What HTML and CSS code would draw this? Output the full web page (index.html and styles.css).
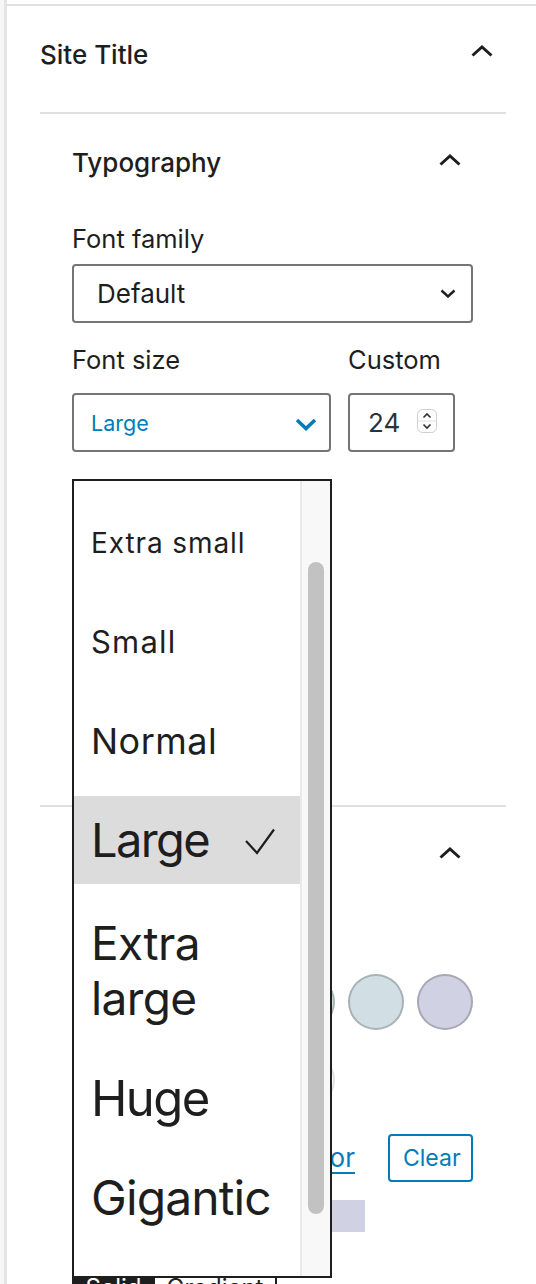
FILE: index.html
```html
<!DOCTYPE html>
<html lang="en">
<head>
<meta charset="utf-8">
<title>Site Title – Typography</title>
<link rel="stylesheet" href="styles.css">
</head>
<body>
<div class="app">
  <div class="rail"></div>
  <div class="panel">
    <div class="sidebar">
      <div class="panel-head">
        <h2 class="panel-title">Site Title</h2>
        <svg class="chev-up" viewBox="0 0 22 12" aria-hidden="true"><polyline points="1.5,10.5 11,2 20.5,10.5" fill="none" stroke="#1e1e1e" stroke-width="3"/></svg>
      </div>
      <div class="divider"></div>

      <section class="tools typography">
        <div class="tools-head">
          <h3 class="tools-title">Typography</h3>
          <svg class="chev-up" viewBox="0 0 22 12" aria-hidden="true"><polyline points="1.5,10.5 11,2 20.5,10.5" fill="none" stroke="#1e1e1e" stroke-width="3"/></svg>
        </div>
        <label class="field-label">Font family</label>
        <div class="select select-wide">
          <span class="select-value">Default</span>
          <svg class="caret-sm" viewBox="0 0 16 9" aria-hidden="true"><polyline points="1.5,1.5 8,7.5 14.5,1.5" fill="none" stroke="#1e1e1e" stroke-width="2.4"/></svg>
        </div>
        <div class="size-row">
          <div class="size-col">
            <label class="field-label">Font size</label>
            <div class="select select-size">
              <span class="select-value is-blue">Large</span>
              <svg class="caret-blue" viewBox="0 0 22 13" aria-hidden="true"><polyline points="2,2 11,10.5 20,2" fill="none" stroke="#007cba" stroke-width="3.6"/></svg>
            </div>
          </div>
          <div class="custom-col">
            <label class="field-label">Custom</label>
            <div class="number">
              <span class="number-value">24</span>
              <svg class="spinner" viewBox="0 0 20 24" aria-hidden="true">
                <rect x="0.5" y="0.5" width="19" height="23" rx="5" fill="#fdfdfd" stroke="#cfcfcf"/>
                <line x1="0.5" y1="12" x2="19.5" y2="12" stroke="#e2e2e2"/>
                <polyline points="6.5,8.5 10,5 13.5,8.5" fill="none" stroke="#2c3338" stroke-width="1.6"/>
                <polyline points="6.5,15.5 10,19 13.5,15.5" fill="none" stroke="#2c3338" stroke-width="1.6"/>
              </svg>
            </div>
          </div>
        </div>
      </section>

      <div class="divider"></div>

      <section class="tools color">
        <div class="tools-head">
          <h3 class="tools-title">Color</h3>
          <svg class="chev-up" viewBox="0 0 22 12" aria-hidden="true"><polyline points="1.5,10.5 11,2 20.5,10.5" fill="none" stroke="#1e1e1e" stroke-width="3"/></svg>
        </div>
        <div class="swatches">
          <span class="swatch sw-black"></span>
          <span class="swatch sw-darkgray"></span>
          <span class="swatch sw-gray"></span>
          <span class="swatch sw-green"></span>
          <span class="swatch sw-blue"></span>
          <span class="swatch sw-purple"></span>
          <span class="swatch sw-red"></span>
          <span class="swatch sw-orange"></span>
          <span class="swatch sw-yellow"></span>
          <span class="swatch sw-white"></span>
        </div>
        <div class="picker-actions">
          <a class="link-btn">Custom color</a>
          <button class="btn-clear" type="button">Clear</button>
        </div>
        <div class="color-bar"></div>
        <div class="tabs">
          <span class="tab tab-solid is-active">Solid</span>
          <span class="tab tab-gradient">Gradient</span>
        </div>
      </section>
    </div>
  </div>

  <div class="dropdown" role="listbox">
    <div class="options">
      <div class="option opt-xs">Extra small</div>
      <div class="option opt-sm">Small</div>
      <div class="option opt-md">Normal</div>
      <div class="option opt-lg is-selected"><span>Large</span><svg class="check" viewBox="0 0 30 27" aria-hidden="true"><polyline points="1,13 12,25 29,1.5" fill="none" stroke="#1e1e1e" stroke-width="2.2"/></svg></div>
      <div class="option opt-xl">Extra large</div>
      <div class="option opt-huge">Huge</div>
      <div class="option opt-gig">Gigantic</div>
    </div>
    <div class="scrolltrack"><div class="thumb"></div></div>
  </div>
</div>
</body>
</html>
```

FILE: styles.css
```css
* { box-sizing: border-box; }

html, body {
  margin: 0;
  padding: 0;
  overflow: hidden;
  background: #fff;
}

body {
  font-family: Inter, "Noto Sans", sans-serif;
  color: #1e1e1e;
}

.app {
  position: relative;
  display: flex;
  width: 536px;
  height: 1284px;
  overflow: hidden;
}

.rail {
  flex: none;
  width: 7px;
  background: #f6f6f6;
  border-right: 3px solid #e4e4e4;
}

.panel {
  flex: 1;
  min-width: 0;
  padding-top: 4px;
}

.sidebar {
  border-top: 2px solid #e0e0e0;
  padding: 0 30px 0 33px;
}

.panel-head {
  height: 97px;
  margin-bottom: 9px;
  display: flex;
  align-items: center;
  justify-content: space-between;
}

.panel-title,
.tools-title {
  margin: 0;
  font-size: 26px;
  font-weight: 500;
  line-height: 32px;
}

.chev-up {
  flex: none;
  width: 22px;
  height: 12px;
}

.panel-head .chev-up { margin: 0 13px 8px 0; }

.divider {
  height: 2px;
  background: #e0e0e0;
}

.tools {
  padding: 0 33px 0 32px;
}

.typography { padding-bottom: 353px; }

.tools-head {
  height: 60px;
  margin-top: 19px;
  display: flex;
  align-items: center;
  justify-content: space-between;
}

.tools-head .chev-up { margin: 0 12px 6px 0; }

.field-label {
  display: block;
  font-size: 25.5px;
  line-height: 30px;
  color: #1e1e1e;
}

.tools-head + .field-label { margin-top: 31px; }

.select {
  height: 59px;
  border: 2px solid #757575;
  border-radius: 4px;
  display: flex;
  align-items: center;
  justify-content: space-between;
  background: #fff;
}

.select-wide {
  margin-top: 10px;
  padding: 0 15px 0 23px;
}

.select-value {
  font-size: 26px;
  line-height: 32px;
}

.caret-sm { width: 16px; height: 9px; flex: none; }

.size-row {
  display: flex;
  gap: 17px;
  margin-top: 22px;
}

.size-col { width: 259px; flex: none; }
.custom-col { width: 107px; flex: none; }

.size-row .select,
.number { margin-top: 18px; }

.select-size { padding: 0 12px 0 17px; }

.select-size .select-value {
  font-size: 21.5px;
  color: #007cba;
}

.caret-blue { width: 22px; height: 13px; flex: none; margin-top: 4px; }

.number {
  height: 59px;
  border: 2px solid #757575;
  border-radius: 4px;
  display: flex;
  align-items: center;
  justify-content: space-between;
  padding: 0 16px 0 18px;
}

.number-value {
  font-size: 26px;
  line-height: 32px;
  color: #2c3338;
}

.spinner { width: 20px; height: 24px; flex: none; margin-top: -3px; }

/* color section (mostly beneath the open list) */
.swatches {
  display: flex;
  flex-wrap: wrap;
  gap: 22px 13px;
  margin-top: 88px;
}

.swatch {
  width: 56px;
  height: 56px;
  border-radius: 50%;
  box-shadow: inset 0 0 0 2px rgba(0, 0, 0, 0.2);
}

.sw-black { background: #000; }
.sw-darkgray { background: #28303d; }
.sw-gray { background: #39414d; }
.sw-green { background: #d1e4dd; }
.sw-blue { background: #d1dfe4; }
.sw-purple { background: #d1d1e4; }
.sw-red { background: #e4d1d1; }
.sw-orange { background: #e4dad1; }
.sw-yellow { background: #eeeadd; }
.sw-white { background: #fff; box-shadow: inset 0 0 0 2px rgba(0, 0, 0, 0.12); }

.picker-actions {
  display: flex;
  justify-content: flex-end;
  align-items: center;
  gap: 33px;
  margin-top: 26px;
}

.link-btn {
  font-size: 26px;
  line-height: 32px;
  color: #007cba;
  text-decoration: underline;
  text-decoration-thickness: 2px;
  text-underline-offset: 5px;
}

.btn-clear {
  width: 85px;
  height: 48px;
  padding: 0 0 0 13px;
  text-align: left;
  border: 2px solid #007cba;
  border-radius: 4px;
  background: #fff;
  color: #007cba;
  font-family: Inter, "Noto Sans", sans-serif;
  font-size: 23px;
}

.color-bar {
  margin-top: 18px;
  width: 293px;
  height: 32px;
  background: #d1d1e4;
}

.tabs {
  display: flex;
  margin-top: 31px;
}

.tab {
  height: 48px;
  border: 2px solid #1e1e1e;
  font-size: 24px;
  line-height: 46px;
  text-align: center;
  color: #1e1e1e;
}

.tab-solid { width: 83px; }
.tab-gradient { width: 122px; border-left: 0; }
.tab.is-active { background: #1e1e1e; color: #fff; }

/* open native list */
.dropdown {
  position: absolute;
  left: 72px;
  top: 479px;
  width: 260px;
  height: 799px;
  border: 2px solid #1e1e1e;
  background: #fff;
  display: flex;
  overflow: hidden;
}

.options {
  flex: 1;
  min-width: 0;
  padding-top: 18px;
  overflow: hidden;
}

.option {
  height: 88px;
  line-height: 88px;
  margin-bottom: 11px;
  padding: 0 25px 0 17px;
  display: flex;
  align-items: center;
  justify-content: space-between;
  white-space: nowrap;
  color: #1e1e1e;
}

.opt-xs { font-size: 28px; letter-spacing: 0.9px; }
.opt-sm { font-size: 31px; letter-spacing: 1.2px; }
.opt-md { font-size: 36px; letter-spacing: 0.5px; }
.opt-lg { font-size: 47px; letter-spacing: -1.6px; }

.opt-xl {
  display: block;
  height: auto;
  font-size: 46px;
  letter-spacing: -0.6px;
  line-height: 55px;
  padding-top: 21px;
  padding-bottom: 18px;
  white-space: normal;
}

.opt-huge { font-size: 49px; letter-spacing: -1.6px; }
.opt-gig { font-size: 48px; letter-spacing: -0.9px; }

.is-selected { background: #dcdcdc; }

.check { width: 30px; height: 27px; flex: none; margin-top: 3px; }

.scrolltrack {
  flex: none;
  width: 30px;
  background: #f8f8f8;
  border-left: 2px solid #e9e9e9;
  padding: 81px 0 0 6px;
}

.thumb {
  width: 16px;
  height: 652px;
  border-radius: 8px;
  background: #c2c2c2;
}
```
